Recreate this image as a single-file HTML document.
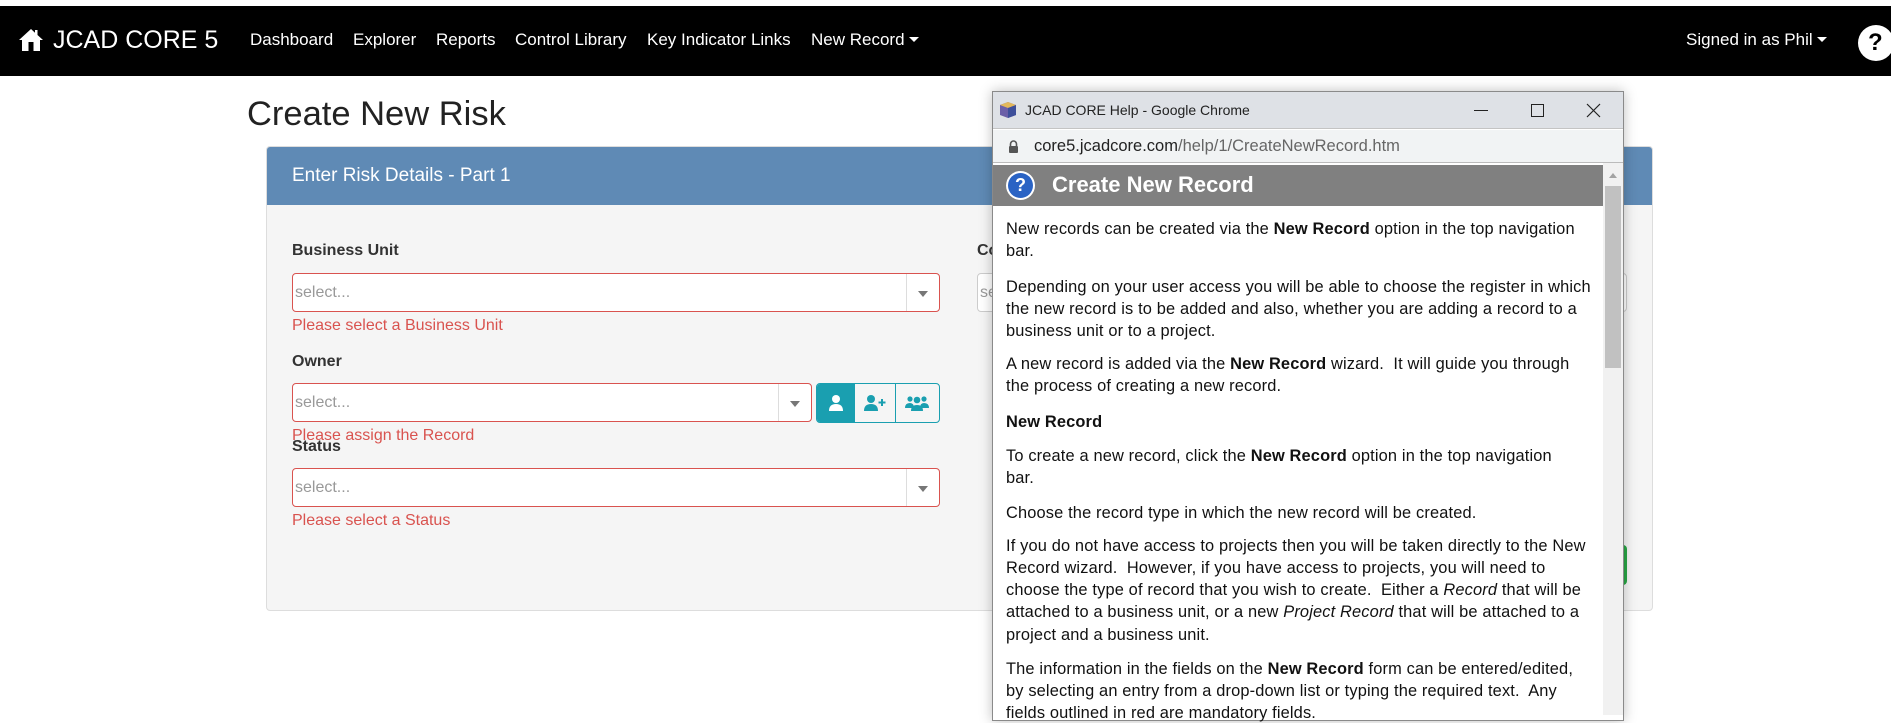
<!DOCTYPE html>
<html><head><meta charset="utf-8"><style>
*{box-sizing:border-box;margin:0;padding:0}
body{width:1891px;height:715px;overflow:hidden;background:#fff;font-family:"Liberation Sans",Arial,sans-serif;position:relative;color:#333}
.abs{position:absolute}
.nav{left:0;top:6px;width:1891px;height:70px;background:#000}
.nav .l{position:absolute;top:24px;color:#fff;font-size:17px;white-space:nowrap}
.caret{display:inline-block;width:0;height:0;border-left:5px solid transparent;border-right:5px solid transparent;border-top:5px solid #fff;vertical-align:middle;margin-left:4px;margin-top:-3px}
.lbl{position:absolute;font-size:16px;font-weight:bold;color:#333}
.sel{position:absolute;height:39px;background:#fff;border:1px solid #d9534f;border-radius:4px}
.sel span{position:absolute;left:2px;top:10px;color:#999;font-size:16px}
.sel i{position:absolute;top:0;bottom:0;width:1px;background:#ddd}
.sel b{position:absolute;top:17px;border-left:5px solid transparent;border-right:5px solid transparent;border-top:6px solid #777;width:0;height:0}
.err{position:absolute;color:#d9534f;font-size:16px}
.pt{position:absolute;left:1006px;font-family:"Liberation Sans",sans-serif;font-size:16.4px;color:#111;white-space:nowrap;letter-spacing:0.15px}
</style></head><body>
<div class="abs nav">
 <svg class="abs" style="left:18px;top:21px" width="26" height="26" viewBox="0 0 26 26"><path d="M13 2 L1 13 H4 V24 H22 V13 H25 L19.5 8 V3 H17 V5.8 Z" fill="#fff"/><rect x="10.5" y="15" width="5" height="9" fill="#000"/></svg>
 <div class="l" style="left:53px;top:20px;font-size:25px">JCAD CORE 5</div>
 <div class="l" style="left:250px">Dashboard</div>
 <div class="l" style="left:353px">Explorer</div>
 <div class="l" style="left:436px">Reports</div>
 <div class="l" style="left:515px">Control Library</div>
 <div class="l" style="left:647px">Key Indicator Links</div>
 <div class="l" style="left:811px">New Record<span class="caret"></span></div>
 <div class="l" style="left:1686px">Signed in as Phil<span class="caret"></span></div>
 <div class="abs" style="left:1858px;top:19px;width:36px;height:36px;border-radius:50%;background:#fff;color:#000;font-weight:bold;font-size:24px;line-height:36px;padding-left:10px">?</div>
</div>

<div class="abs" style="left:247px;top:95px;font-size:34.5px;color:#222">Create New Risk</div>

<div class="abs" style="left:266px;top:146px;width:1387px;height:465px;border:1px solid #ddd;border-radius:4px;background:#f5f5f5;overflow:hidden">
 <div style="height:58px;background:#5f8ab5;color:#fff;font-size:19px;padding:18px 0 0 25px">Enter Risk Details - Part 1</div>
</div>

<div class="lbl" style="left:292px;top:242px">Business Unit</div>
<div class="sel" style="left:292px;top:273px;width:648px"><span>select...</span><i style="left:613px"></i><b style="left:625px"></b></div>
<div class="err" style="left:292px;top:317px">Please select a Business Unit</div>

<div class="lbl" style="left:292px;top:353px">Owner</div>
<div class="sel" style="left:292px;top:383px;width:520px"><span>select...</span><i style="left:485px"></i><b style="left:497px"></b></div>
<div class="abs" style="left:816px;top:383px;width:124px;height:40px;border:1px solid #1a9fb0;border-radius:4px;background:#f5f5f5;overflow:hidden">
 <div class="abs" style="left:0;top:0;width:37px;height:40px;background:#1a9fb0"></div>
 <div class="abs" style="left:78px;top:0;width:1px;height:40px;background:#1a9fb0"></div>
 <div class="abs" style="left:37px;top:0;width:1px;height:40px;background:#1a9fb0"></div>
 <svg class="abs" style="left:10px;top:10px" width="18" height="18" viewBox="0 0 18 18"><circle cx="9" cy="5" r="4" fill="#fff"/><path d="M2 17 Q2 10 9 10 Q16 10 16 17Z" fill="#fff"/></svg>
 <svg class="abs" style="left:46px;top:10px" width="24" height="18" viewBox="0 0 24 18"><circle cx="8" cy="5" r="4" fill="#1a9fb0"/><path d="M1 17 Q1 10 8 10 Q15 10 15 17Z" fill="#1a9fb0"/><path d="M19 5v7M15.5 8.5h7" stroke="#1a9fb0" stroke-width="2"/></svg>
 <svg class="abs" style="left:88px;top:10px" width="24" height="18" viewBox="0 0 24 18"><circle cx="5" cy="5" r="2.6" fill="#1a9fb0"/><circle cx="19" cy="5" r="2.6" fill="#1a9fb0"/><circle cx="12" cy="6" r="3.3" fill="#1a9fb0"/><path d="M0 14Q0 9 5 9Q9 9 9 14Z M15 14Q15 9 19 9Q24 9 24 14Z M6 17Q6 11 12 11Q18 11 18 17Z" fill="#1a9fb0"/></svg>
</div>
<div class="err" style="left:292px;top:427px">Please assign the Record</div>
<div class="lbl" style="left:292px;top:438px">Status</div>
<div class="sel" style="left:292px;top:468px;width:648px"><span>select...</span><i style="left:613px"></i><b style="left:625px"></b></div>
<div class="err" style="left:292px;top:512px">Please select a Status</div>

<div class="lbl" style="left:977px;top:242px">Co</div>
<div class="abs" style="left:977px;top:273px;width:650px;height:39px;border:1px solid #ccc;border-radius:4px;background:#fff;color:#999;font-size:16px;padding:10px 2px">se</div>
<div class="abs" style="left:1600px;top:545px;width:27px;height:40px;background:#28a745;border-radius:4px"></div>

<!-- popup -->
<div class="abs" style="left:992px;top:91px;width:632px;height:630px;background:#fff;border:1px solid #8a8a8a;box-shadow:0 0 12px rgba(0,0,0,.25)"></div>
<div class="abs" style="left:993px;top:92px;width:630px;height:37px;background:#dee1e6;border-bottom:1px solid #c4c4c4"></div>
<svg class="abs" style="left:999px;top:101px" width="18" height="18" viewBox="0 0 18 18"><path d="M9 1L17 4V14L9 17L1 14V4Z" fill="#6b5fa8"/><path d="M9 1L17 4L9 7L1 4Z" fill="#e3b85a"/><path d="M9 7V17L17 14V4Z" fill="#3d4f9a"/></svg>
<div class="abs" style="left:1025px;top:102px;font-size:14px;color:#222">JCAD CORE Help - Google Chrome</div>
<div class="abs" style="left:1474px;top:110px;width:14px;height:1px;background:#222"></div>
<div class="abs" style="left:1531px;top:104px;width:13px;height:13px;border:1px solid #222"></div>
<svg class="abs" style="left:1586px;top:103px" width="15" height="15" viewBox="0 0 15 15"><path d="M1 1L14 14M14 1L1 14" stroke="#222" stroke-width="1.2"/></svg>
<div class="abs" style="left:993px;top:130px;width:630px;height:33px;background:#f1f3f4;border-bottom:1px solid #bbb"></div>
<svg class="abs" style="left:1008px;top:140px" width="11" height="13" viewBox="0 0 11 13"><path d="M2.5 6V4a3 3 0 0 1 6 0V6" stroke="#555" stroke-width="1.6" fill="none"/><rect x="1" y="6" width="9" height="7" rx="1" fill="#555"/></svg>
<div class="abs" style="left:1034px;top:137px;font-size:16.5px;color:#222;white-space:nowrap">core5.jcadcore.com<span style="color:#666">/help/1/CreateNewRecord.htm</span></div>
<div class="abs" style="left:993px;top:165px;width:610px;height:41px;background:#808080"></div>
<div class="abs" style="left:1006px;top:171px;width:29px;height:29px;border-radius:50%;background:#fff"></div>
<div class="abs" style="left:1008px;top:173px;width:25px;height:25px;border-radius:50%;background:#2a63c4;color:#fff;font-weight:bold;font-size:18px;text-align:center;line-height:25px">?</div>
<div class="abs" style="left:1052px;top:172px;font-size:22px;font-weight:bold;color:#fff">Create New Record</div>
<div class="abs" style="left:1603px;top:163px;width:20px;height:552px;background:#f1f1f1"></div>
<div class="abs" style="left:1609px;top:173px;border-left:4px solid transparent;border-right:4px solid transparent;border-bottom:5px solid #a3a3a3;width:0;height:0"></div>
<div class="abs" style="left:1605px;top:186px;width:16px;height:182px;background:#c1c1c1"></div>

<div class="pt" style="top:220px">New records can be created via the <b>New Record</b> option in the top navigation</div>
<div class="pt" style="top:242px">bar.</div>
<div class="pt" style="top:278px">Depending on your user access you will be able to choose the register in which</div>
<div class="pt" style="top:300px">the new record is to be added and also, whether you are adding a record to a</div>
<div class="pt" style="top:322px">business unit or to a project.</div>
<div class="pt" style="top:355px">A new record is added via the <b>New Record</b> wizard.&nbsp; It will guide you through</div>
<div class="pt" style="top:377px">the process of creating a new record.</div>
<div class="pt" style="top:413px"><b>New Record</b></div>
<div class="pt" style="top:447px">To create a new record, click the <b>New Record</b> option in the top navigation</div>
<div class="pt" style="top:469px">bar.</div>
<div class="pt" style="top:504px">Choose the record type in which the new record will be created.</div>
<div class="pt" style="top:537px">If you do not have access to projects then you will be taken directly to the New</div>
<div class="pt" style="top:559px">Record wizard.&nbsp; However, if you have access to projects, you will need to</div>
<div class="pt" style="top:581px">choose the type of record that you wish to create.&nbsp; Either a <i>Record</i> that will be</div>
<div class="pt" style="top:603px">attached to a business unit, or a new <i>Project Record</i> that will be attached to a</div>
<div class="pt" style="top:626px">project and a business unit.</div>
<div class="pt" style="top:660px">The information in the fields on the <b>New Record</b> form can be entered/edited,</div>
<div class="pt" style="top:682px">by selecting an entry from a drop-down list or typing the required text.&nbsp; Any</div>
<div class="pt" style="top:704px">fields outlined in red are mandatory fields.</div>
</body></html>
